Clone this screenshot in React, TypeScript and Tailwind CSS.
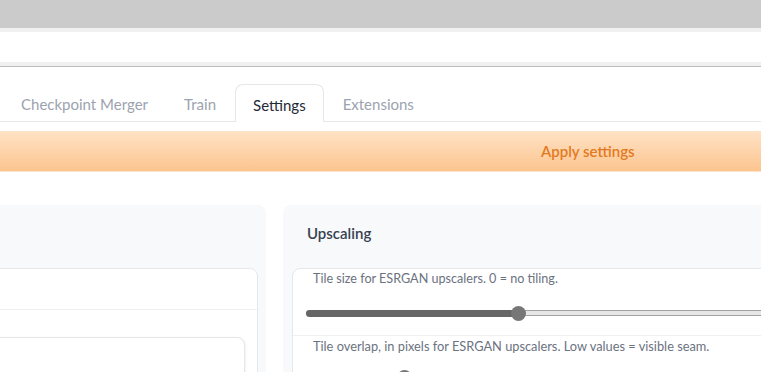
const tabs = ["Checkpoint Merger", "Train", "Settings", "Extensions"];

function Slider({ pct }: { pct: number }) {
  return (
    <div className="relative h-[16px] mx-[13px]">
      <div className="absolute left-0 right-0 top-[5px] h-[6px] rounded-full bg-[#e6e6e6] border border-[#a3a3a3]" />
      <div className="absolute left-0 top-[5px] h-[7px] rounded-full bg-[#666]" style={{ width: `${pct}px` }} />
      <div
        className="absolute top-[1px] w-[15px] h-[15px] rounded-full bg-[#777] -ml-[7px]"
        style={{ left: `${pct}px` }}
      />
    </div>
  );
}

export default function App() {
  return (
    <div className="w-[761px] h-[372px] overflow-hidden bg-white font-['Lato','Liberation_Sans',sans-serif]">
      <div className="h-[28px] bg-[#cbcbcb]" />
      <div className="h-[4px] bg-[#f0f0f0]" />
      <div className="h-[30px] bg-white" />
      <div className="h-[4px] bg-[#f0f0f0]" />
      <div className="h-px bg-[#bdbdbd]" />

      <div className="pt-[17px]">
        <div className="flex gap-[2px] border-b border-[#e5e7eb] pl-[4px] h-[38px]">
          {tabs.map((t) =>
            t === "Settings" ? (
              <div
                key={t}
                className="h-[38px] px-[17px] pt-[3px] flex items-center rounded-t-lg border border-b-0 border-[#e5e7eb] bg-white text-[15px] text-[#1f2937]"
              >
                {t}
              </div>
            ) : (
              <div key={t} className="h-[37px] px-[17px] pt-[3px] flex items-center text-[15px] text-[#9ca3af]">
                {t}
              </div>
            )
          )}
        </div>
      </div>

      <div className="mt-[9px] h-[41px] mx-[-10px] flex items-center pl-[550px] bg-gradient-to-b from-[#fee2c4] to-[#fcc48e] border border-[#fde2c8]">
        <span className="text-[15px] font-semibold text-[#e27a22]">Apply settings</span>
      </div>

      <div className="mt-[33px] flex gap-[17px] ml-[-40px]">
        <div className="w-[306px] shrink-0 h-[200px] rounded-lg bg-[#f8f9fa] pt-[63px] pr-[8px]">
          <div className="h-[200px] rounded-lg border border-[#e5e7eb] bg-white">
            <div className="h-[41px] border-b border-[#f0f0f0]" />
            <div className="mt-[27px] mr-[12px] h-[80px] rounded-lg border border-[#e5e7eb] bg-white shadow-sm" />
          </div>
        </div>

        <div className="w-[520px] shrink-0 h-[200px] rounded-lg bg-[#f8f9fa] pt-[18px] pl-[9px]">
          <div className="pl-[15px] text-[15px] font-semibold leading-[20px] text-[#374151]">Upscaling</div>
          <div className="mt-[25px] rounded-lg border border-[#e5e7eb] bg-white">
            <div className="border-b border-[#f0f0f0] pb-[14px]">
              <div className="pl-[20px] pt-[1px] text-[12.6px] leading-[18px] text-[#6b7280]">
                Tile size for ESRGAN upscalers. 0 = no tiling.
              </div>
              <div className="mt-[17px]">
                <Slider pct={212} />
              </div>
            </div>
            <div className="pl-[20px] pt-[1px] text-[12.8px] leading-[18px] text-[#6b7280]">
              Tile overlap, in pixels for ESRGAN upscalers. Low values = visible seam.
            </div>
            <div className="mt-[14px]">
              <Slider pct={98} />
            </div>
          </div>
        </div>
      </div>
    </div>
  );
}
